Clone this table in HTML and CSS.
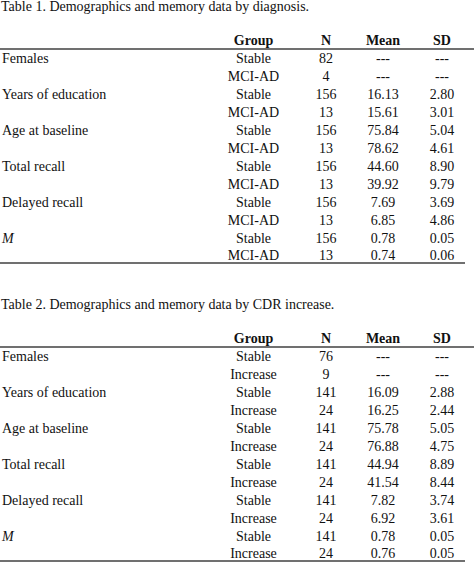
FILE: index.html
```html
<!DOCTYPE html>
<html>
<head>
<meta charset="utf-8">
<link rel="stylesheet" href="styles.css">
</head>
<body>
<section class="block">
  <p class="caption">Table 1. Demographics and memory data by diagnosis.</p>
  <table class="data">
    <colgroup><col class="c-label"><col class="c-group"><col class="c-n"><col class="c-mean"><col class="c-sd"><col class="c-pad"></colgroup>
    <thead>
      <tr><th class="label"></th><th>Group</th><th>N</th><th>Mean</th><th class="sd">SD</th><th class="pad"></th></tr>
    </thead>
    <tbody>
      <tr><td class="label">Females</td><td>Stable</td><td>82</td><td>---</td><td class="sd">---</td><td class="pad"></td></tr>
      <tr><td class="label"></td><td>MCI-AD</td><td>4</td><td>---</td><td class="sd">---</td><td class="pad"></td></tr>
      <tr><td class="label">Years of education</td><td>Stable</td><td>156</td><td>16.13</td><td class="sd">2.80</td><td class="pad"></td></tr>
      <tr><td class="label"></td><td>MCI-AD</td><td>13</td><td>15.61</td><td class="sd">3.01</td><td class="pad"></td></tr>
      <tr><td class="label">Age at baseline</td><td>Stable</td><td>156</td><td>75.84</td><td class="sd">5.04</td><td class="pad"></td></tr>
      <tr><td class="label"></td><td>MCI-AD</td><td>13</td><td>78.62</td><td class="sd">4.61</td><td class="pad"></td></tr>
      <tr><td class="label">Total recall</td><td>Stable</td><td>156</td><td>44.60</td><td class="sd">8.90</td><td class="pad"></td></tr>
      <tr><td class="label"></td><td>MCI-AD</td><td>13</td><td>39.92</td><td class="sd">9.79</td><td class="pad"></td></tr>
      <tr><td class="label">Delayed recall</td><td>Stable</td><td>156</td><td>7.69</td><td class="sd">3.69</td><td class="pad"></td></tr>
      <tr><td class="label"></td><td>MCI-AD</td><td>13</td><td>6.85</td><td class="sd">4.86</td><td class="pad"></td></tr>
      <tr><td class="label"><em>M</em></td><td>Stable</td><td>156</td><td>0.78</td><td class="sd">0.05</td><td class="pad"></td></tr>
      <tr class="last"><td class="label"></td><td>MCI-AD</td><td>13</td><td>0.74</td><td class="sd">0.06</td><td class="pad"></td></tr>
    </tbody>
  </table>
</section>
<section class="block second">
  <p class="caption">Table 2. Demographics and memory data by CDR increase.</p>
  <table class="data">
    <colgroup><col class="c-label"><col class="c-group"><col class="c-n"><col class="c-mean"><col class="c-sd"><col class="c-pad"></colgroup>
    <thead>
      <tr><th class="label"></th><th>Group</th><th>N</th><th>Mean</th><th class="sd">SD</th><th class="pad"></th></tr>
    </thead>
    <tbody>
      <tr><td class="label">Females</td><td>Stable</td><td>76</td><td>---</td><td class="sd">---</td><td class="pad"></td></tr>
      <tr><td class="label"></td><td>Increase</td><td>9</td><td>---</td><td class="sd">---</td><td class="pad"></td></tr>
      <tr><td class="label">Years of education</td><td>Stable</td><td>141</td><td>16.09</td><td class="sd">2.88</td><td class="pad"></td></tr>
      <tr><td class="label"></td><td>Increase</td><td>24</td><td>16.25</td><td class="sd">2.44</td><td class="pad"></td></tr>
      <tr><td class="label">Age at baseline</td><td>Stable</td><td>141</td><td>75.78</td><td class="sd">5.05</td><td class="pad"></td></tr>
      <tr><td class="label"></td><td>Increase</td><td>24</td><td>76.88</td><td class="sd">4.75</td><td class="pad"></td></tr>
      <tr><td class="label">Total recall</td><td>Stable</td><td>141</td><td>44.94</td><td class="sd">8.89</td><td class="pad"></td></tr>
      <tr><td class="label"></td><td>Increase</td><td>24</td><td>41.54</td><td class="sd">8.44</td><td class="pad"></td></tr>
      <tr><td class="label">Delayed recall</td><td>Stable</td><td>141</td><td>7.82</td><td class="sd">3.74</td><td class="pad"></td></tr>
      <tr><td class="label"></td><td>Increase</td><td>24</td><td>6.92</td><td class="sd">3.61</td><td class="pad"></td></tr>
      <tr><td class="label"><em>M</em></td><td>Stable</td><td>141</td><td>0.78</td><td class="sd">0.05</td><td class="pad"></td></tr>
      <tr class="last"><td class="label"></td><td>Increase</td><td>24</td><td>0.76</td><td class="sd">0.05</td><td class="pad"></td></tr>
    </tbody>
  </table>
</section>
</body>
</html>
```

FILE: styles.css
```css
html, body {
  margin: 0;
  padding: 0;
  background: #ffffff;
}
body {
  width: 474px;
  font-family: "Liberation Serif", "Times New Roman", serif;
  font-size: 14px;
  color: #111111;
  overflow: hidden;
}
.block {
  display: block;
}
.second {
  margin-top: 34px;
}
.caption {
  margin: 0;
  padding-left: 1px;
  line-height: 13px;
  height: 13px;
}
.data {
  margin-top: 20px;
  border-collapse: collapse;
  table-layout: fixed;
  width: 474px;
}
.c-label { width: 212px; }
.c-group { width: 83px; }
.c-n { width: 62px; }
.c-mean { width: 52px; }
.c-sd { width: 56px; }
.c-pad { width: 9px; }
.data th,
.data td {
  padding: 0;
  text-align: center;
  font-weight: normal;
  white-space: nowrap;
}
.data td {
  line-height: 18px;
  height: 18px;
}
.data th {
  font-weight: bold;
  line-height: 15px;
  height: 15px;
  border-bottom: 2px solid #707070;
}
.data .label {
  text-align: left;
  padding-left: 2px;
}
.data .sd {
  padding-left: 10px;
}
.data .last td {
  padding-top: 2px;
  line-height: 12px;
  height: 12px;
  border-bottom: 2px solid #707070;
}
.data .last td.pad {
  border-bottom: none;
}
.data em {
  font-style: italic;
}
```
